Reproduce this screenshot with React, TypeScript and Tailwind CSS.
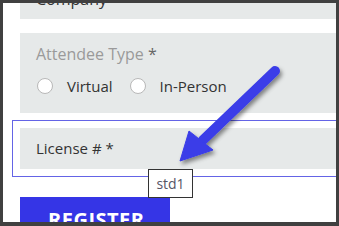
const FONT = { fontFamily: '"Open Sans", "Noto Sans", sans-serif' };

const Radio = ({ label }: { label: string }) => (
  <label className="flex items-center gap-[14px]">
    <span className="w-4 h-4 rounded-full bg-white border border-[#b8b8b8]" />
    <span className="text-[15px] text-[#333]">{label}</span>
  </label>
);

const Arrow = () => (
  <svg
    className="absolute left-0 top-0 pointer-events-none"
    width="339"
    height="226"
    viewBox="0 0 339 226"
  >
    <defs>
      <filter id="sh" x="-20%" y="-20%" width="140%" height="140%">
        <feDropShadow dx="2" dy="3" stdDeviation="2" floodColor="#000" floodOpacity="0.45" />
      </filter>
    </defs>
    <g filter="url(#sh)" fill="#3a3de8" stroke="#3a3de8">
      <line x1="275" y1="71" x2="203" y2="140" strokeWidth="10" strokeLinecap="round" />
      <polygon points="180,161 189,131 213,150" strokeWidth="1" strokeLinejoin="round" />
    </g>
  </svg>
);

export default function App() {
  return (
    <div className="relative w-[339px] h-[226px] bg-white border-[3px] border-[#404040] border-b-4 overflow-hidden" style={FONT}>
      <div className="-mt-[34px] flex flex-col">
        {/* company field */}
        <div className="ml-[17px] w-[340px] h-[50px] bg-[#e6e9e9] pl-4 pt-[18px]">
          <span className="text-[16px] text-[#333]">Company</span>
        </div>

        {/* attendee type */}
        <div className="ml-[17px] mt-[14px] w-[340px] h-[80px] bg-[#e6e9e9] pl-4 pt-[10px]">
          <div className="text-[16px] text-[#9a9a9a] leading-[22px]">
            Attendee Type <span className="text-[#666]">*</span>
          </div>
          <div className="flex items-center gap-[17px] mt-[10px] pl-px">
            <Radio label="Virtual" />
            <Radio label="In-Person" />
          </div>
        </div>

        {/* license (selected) */}
        <div className="ml-[9px] mt-[7px] w-[340px] border border-[#6464e6] bg-white p-[7px]">
          <div className="w-[340px] h-[41px] bg-[#e6e9e9] pl-4 flex items-center">
            <span className="text-[15px] text-[#333]">License # *</span>
          </div>
        </div>

        {/* register */}
        <div className="ml-[17px] mt-[20px] w-[150px] h-[40px] bg-[#3535e6] pt-[8px] pl-[28px]">
          <span className="text-[20px] font-bold text-white tracking-[0.5px]">REGISTER</span>
        </div>
      </div>

      {/* element label tooltip */}
      <div className="absolute left-[145px] top-[166px] w-[45px] h-[29px] bg-white border border-[#333] flex items-center justify-center">
        <span className="text-[14px] text-[#556]">std1</span>
      </div>

      <div className="absolute -left-[3px] -top-[3px]">
        <Arrow />
      </div>
    </div>
  );
}
